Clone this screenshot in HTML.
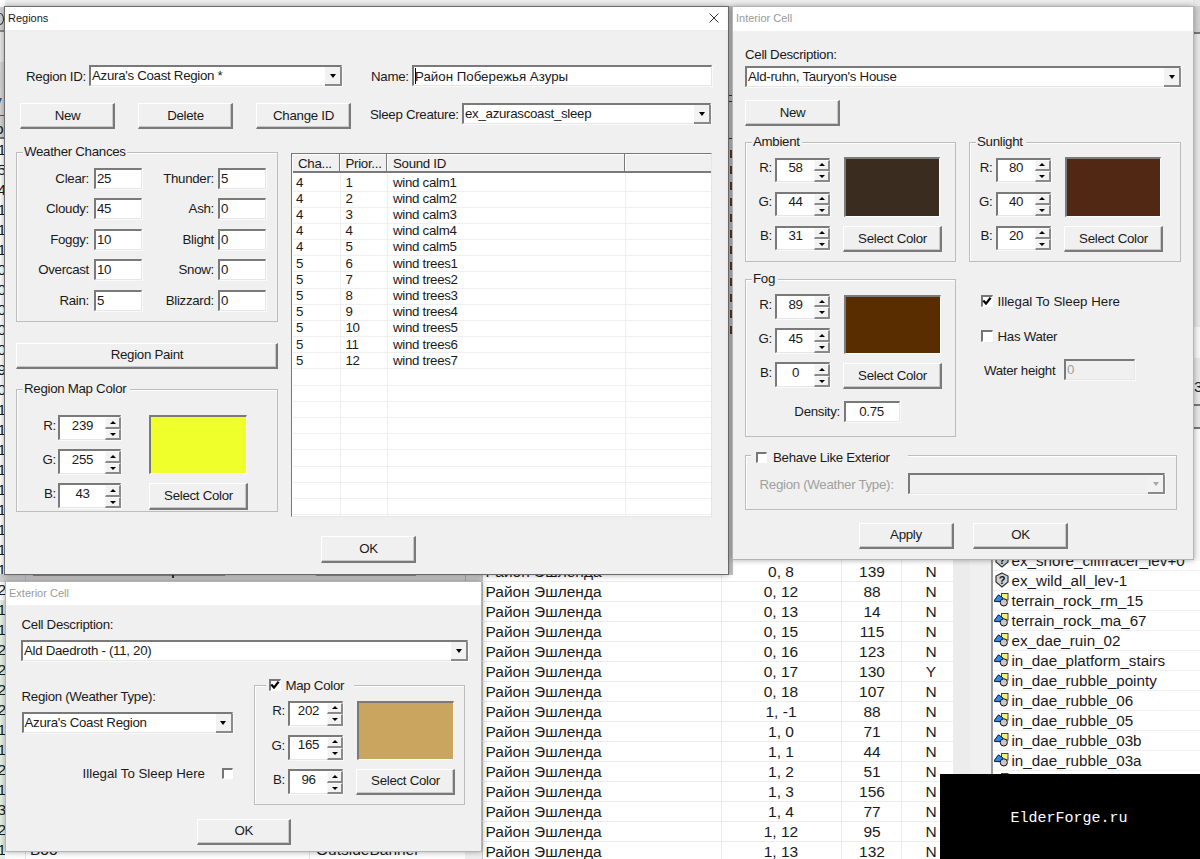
<!DOCTYPE html><html><head><meta charset="utf-8"><style>
html,body{margin:0;padding:0}
body{width:1200px;height:859px;overflow:hidden;position:relative;background:#f0f0f0;font-family:"Liberation Sans", sans-serif}
div{box-sizing:border-box}
.t{position:absolute;white-space:pre;letter-spacing:-0.3px}
.ed{position:absolute;border-style:solid;border-width:2px 1px 1px 2px;border-color:#7a7a7a #e6e6e6 #e6e6e6 #7a7a7a;box-shadow:1px 1px 0 #fafafa}
.cb{position:absolute;background:#f2f2f2;border-style:solid;border-width:0 2px 2px 0;border-color:#8a8a8a}
.arr{position:absolute;left:4.5px;top:7px;width:0;height:0;border-left:3.5px solid transparent;border-right:3.5px solid transparent;border-top:4px solid #000}
.sp{position:absolute;background:#f2f2f2;border-style:solid;border-width:1px 2px 2px 1px;border-color:#fafafa #8a8a8a #8a8a8a #fafafa}
.up{position:absolute;left:3.5px;top:2.5px;width:0;height:0;border-left:3px solid transparent;border-right:3px solid transparent;border-bottom:3px solid #000}
.dn{position:absolute;left:3.5px;top:3px;width:0;height:0;border-left:3px solid transparent;border-right:3px solid transparent;border-top:3px solid #000}
.bt{position:absolute;background:#f0f0f0;border-style:solid;border-width:1px 2px 2px 1px;border-color:#fff #7a7a7a #7a7a7a #fff;box-shadow:inset -1px -1px 0 #c8c8c8}
.gb{position:absolute;border:1px solid #bdbdbd;box-shadow:inset 1px 1px 0 #fff}
.gt{position:absolute;background:#f0f0f0}
.sw{position:absolute;border-style:solid;border-width:2px 1px 1px 2px;border-color:#7a7a7a #fff #fff #7a7a7a}
.ck{position:absolute;background:#fff;border-style:solid;border-width:2px 1px 1px 2px;border-color:#777 #fff #fff #777}
.dl{position:absolute;background:#f0f0f0;border:1px solid #6b6b6b;box-shadow:0 0 6px rgba(0,0,0,0.35)}
.tb{position:absolute;background:#fff}
.abs{position:absolute}
</style></head><body>
<div class="abs" style="left:0;top:0;width:1200px;height:7px;background:#efefef"></div>
<div class="abs" style="left:0;top:0;width:5px;height:859px;background:#fff"></div>
<div class="abs" style="left:0;top:7px;width:5px;height:131px;background:#d4d4d4"></div>
<div class="abs" style="left:0;top:30px;width:5px;height:2px;background:#888"></div>
<div class="abs" style="left:0;top:32px;width:5px;height:30px;background:#e6e6e6"></div>
<div class="abs" style="left:-4px;top:13px;width:8px;height:12px;border:1.5px solid #333;border-radius:50%"></div>
<div class="t" style="left:-5px;top:69.88px;font-size:15.5px;line-height:15.5px;color:#2a3a6a;letter-spacing:0">(</div>
<div class="abs" style="left:0;top:115px;width:5px;height:1px;background:#555"></div>
<div class="abs" style="left:0;top:137px;width:5px;height:2px;background:#777"></div>
<div class="abs" style="left:0;top:600px;width:5px;height:259px;background:#e4f0e4"></div>
<div class="t" style="left:-2.5px;top:141.88px;font-size:15.5px;line-height:15.5px;color:#1a1a1a;letter-spacing:0">1</div>
<div class="t" style="left:-2.5px;top:161.88px;font-size:15.5px;line-height:15.5px;color:#1a1a1a;letter-spacing:0">5</div>
<div class="t" style="left:-2.5px;top:181.88px;font-size:15.5px;line-height:15.5px;color:#1a1a1a;letter-spacing:0">4</div>
<div class="t" style="left:-2.5px;top:201.88px;font-size:15.5px;line-height:15.5px;color:#1a1a1a;letter-spacing:0">1</div>
<div class="t" style="left:-2.5px;top:221.88px;font-size:15.5px;line-height:15.5px;color:#1a1a1a;letter-spacing:0">1</div>
<div class="t" style="left:-2.5px;top:241.88px;font-size:15.5px;line-height:15.5px;color:#1a1a1a;letter-spacing:0">1</div>
<div class="t" style="left:-2.5px;top:261.88px;font-size:15.5px;line-height:15.5px;color:#1a1a1a;letter-spacing:0">0</div>
<div class="t" style="left:-2.5px;top:281.88px;font-size:15.5px;line-height:15.5px;color:#1a1a1a;letter-spacing:0">0</div>
<div class="t" style="left:-2.5px;top:301.88px;font-size:15.5px;line-height:15.5px;color:#1a1a1a;letter-spacing:0">0</div>
<div class="t" style="left:-2.5px;top:321.88px;font-size:15.5px;line-height:15.5px;color:#1a1a1a;letter-spacing:0">0</div>
<div class="t" style="left:-2.5px;top:341.88px;font-size:15.5px;line-height:15.5px;color:#1a1a1a;letter-spacing:0">0</div>
<div class="t" style="left:-2.5px;top:361.88px;font-size:15.5px;line-height:15.5px;color:#1a1a1a;letter-spacing:0">9</div>
<div class="t" style="left:-2.5px;top:381.88px;font-size:15.5px;line-height:15.5px;color:#1a1a1a;letter-spacing:0">0</div>
<div class="t" style="left:-2.5px;top:401.88px;font-size:15.5px;line-height:15.5px;color:#1a1a1a;letter-spacing:0">1</div>
<div class="t" style="left:-2.5px;top:421.88px;font-size:15.5px;line-height:15.5px;color:#1a1a1a;letter-spacing:0">1</div>
<div class="t" style="left:-2.5px;top:441.88px;font-size:15.5px;line-height:15.5px;color:#1a1a1a;letter-spacing:0">1</div>
<div class="t" style="left:-2.5px;top:461.88px;font-size:15.5px;line-height:15.5px;color:#1a1a1a;letter-spacing:0">1</div>
<div class="t" style="left:-2.5px;top:481.88px;font-size:15.5px;line-height:15.5px;color:#1a1a1a;letter-spacing:0">1</div>
<div class="t" style="left:-2.5px;top:501.88px;font-size:15.5px;line-height:15.5px;color:#1a1a1a;letter-spacing:0">1</div>
<div class="t" style="left:-2.5px;top:521.88px;font-size:15.5px;line-height:15.5px;color:#1a1a1a;letter-spacing:0">1</div>
<div class="t" style="left:-2.5px;top:541.88px;font-size:15.5px;line-height:15.5px;color:#1a1a1a;letter-spacing:0">1</div>
<div class="t" style="left:-2.5px;top:561.88px;font-size:15.5px;line-height:15.5px;color:#1a1a1a;letter-spacing:0">1</div>
<div class="t" style="left:-2.5px;top:581.88px;font-size:15.5px;line-height:15.5px;color:#1a1a1a;letter-spacing:0">2</div>
<div class="t" style="left:-2.5px;top:601.88px;font-size:15.5px;line-height:15.5px;color:#1a1a1a;letter-spacing:0">1</div>
<div class="t" style="left:-2.5px;top:621.88px;font-size:15.5px;line-height:15.5px;color:#1a1a1a;letter-spacing:0">1</div>
<div class="t" style="left:-2.5px;top:641.88px;font-size:15.5px;line-height:15.5px;color:#1a1a1a;letter-spacing:0">2</div>
<div class="t" style="left:-2.5px;top:661.88px;font-size:15.5px;line-height:15.5px;color:#1a1a1a;letter-spacing:0">2</div>
<div class="t" style="left:-2.5px;top:681.88px;font-size:15.5px;line-height:15.5px;color:#1a1a1a;letter-spacing:0">2</div>
<div class="t" style="left:-2.5px;top:701.88px;font-size:15.5px;line-height:15.5px;color:#1a1a1a;letter-spacing:0">2</div>
<div class="t" style="left:-2.5px;top:721.88px;font-size:15.5px;line-height:15.5px;color:#1a1a1a;letter-spacing:0">1</div>
<div class="t" style="left:-2.5px;top:741.88px;font-size:15.5px;line-height:15.5px;color:#1a1a1a;letter-spacing:0">1</div>
<div class="t" style="left:-2.5px;top:761.88px;font-size:15.5px;line-height:15.5px;color:#1a1a1a;letter-spacing:0">2</div>
<div class="t" style="left:-2.5px;top:781.88px;font-size:15.5px;line-height:15.5px;color:#1a1a1a;letter-spacing:0">1</div>
<div class="t" style="left:-2.5px;top:801.88px;font-size:15.5px;line-height:15.5px;color:#1a1a1a;letter-spacing:0">3</div>
<div class="t" style="left:-2.5px;top:821.88px;font-size:15.5px;line-height:15.5px;color:#1a1a1a;letter-spacing:0">2</div>
<div class="t" style="left:-2.5px;top:841.88px;font-size:15.5px;line-height:15.5px;color:#1a1a1a;letter-spacing:0">1</div>
<div class="t" style="left:-6px;top:92.88px;font-size:15.5px;line-height:15.5px;color:#2a3a6a;letter-spacing:0">v</div>
<div class="t" style="left:-5px;top:120.88px;font-size:15.5px;line-height:15.5px;color:#1a1a1a;letter-spacing:0">o</div>
<div class="abs" style="left:0;top:574px;width:482px;height:8px;background:#cdcdcd"></div>
<div class="abs" style="left:465px;top:574px;width:1px;height:8px;background:#aaa"></div>
<div class="abs" style="left:25px;top:574px;width:1px;height:8px;background:#bbb"></div>
<div class="abs" style="left:33px;top:575px;width:192px;height:1px;background:#8a8a8a"></div>
<div class="abs" style="left:316px;top:575px;width:100px;height:1px;background:#8a8a8a"></div>
<div class="abs" style="left:172px;top:575px;width:1.5px;height:3px;background:#333"></div>
<div class="abs" style="left:5px;top:845px;width:477px;height:14px;background:#fff"></div>
<div class="abs" style="left:25px;top:845px;width:1px;height:14px;background:#e4e4e4"></div>
<div class="abs" style="left:309px;top:845px;width:1px;height:14px;background:#e4e4e4"></div>
<div class="abs" style="left:465px;top:845px;width:17px;height:14px;background:#f0f0f0"></div>
<div class="t" style="left:30px;top:841.88px;font-size:15.5px;line-height:15.5px;color:#1a1a1a;letter-spacing:0">Boo</div>
<div class="t" style="left:316px;top:841.88px;font-size:15.5px;line-height:15.5px;color:#1a1a1a;letter-spacing:0">OutsideBanner</div>
<div class="abs" style="left:482px;top:540px;width:471px;height:319px;background:#fff"></div>
<div class="abs" style="left:481.5px;top:540px;width:1.5px;height:319px;background:#c4c4c4"></div>
<div class="abs" style="left:721px;top:540px;width:1px;height:319px;background:#ececec"></div>
<div class="abs" style="left:841px;top:540px;width:1px;height:319px;background:#ececec"></div>
<div class="abs" style="left:901px;top:540px;width:1px;height:319px;background:#ececec"></div>
<div class="abs" style="left:482px;top:581px;width:471px;height:1px;background:#ececec"></div>
<div class="t" style="left:485.5px;top:564.38px;font-size:15.5px;line-height:15.5px;color:#1a1a1a;letter-spacing:0">Район Эшленда</div>
<div class="t" style="left:581px;width:400px;text-align:center;top:564.38px;font-size:15.5px;line-height:15.5px;color:#1a1a1a;letter-spacing:0">0, 8</div>
<div class="t" style="left:672px;width:400px;text-align:center;top:564.38px;font-size:15.5px;line-height:15.5px;color:#1a1a1a;letter-spacing:0">139</div>
<div class="t" style="left:731px;width:400px;text-align:center;top:564.38px;font-size:15.5px;line-height:15.5px;color:#1a1a1a;letter-spacing:0">N</div>
<div class="abs" style="left:482px;top:601px;width:471px;height:1px;background:#ececec"></div>
<div class="t" style="left:485.5px;top:584.38px;font-size:15.5px;line-height:15.5px;color:#1a1a1a;letter-spacing:0">Район Эшленда</div>
<div class="t" style="left:581px;width:400px;text-align:center;top:584.38px;font-size:15.5px;line-height:15.5px;color:#1a1a1a;letter-spacing:0">0, 12</div>
<div class="t" style="left:672px;width:400px;text-align:center;top:584.38px;font-size:15.5px;line-height:15.5px;color:#1a1a1a;letter-spacing:0">88</div>
<div class="t" style="left:731px;width:400px;text-align:center;top:584.38px;font-size:15.5px;line-height:15.5px;color:#1a1a1a;letter-spacing:0">N</div>
<div class="abs" style="left:482px;top:621px;width:471px;height:1px;background:#ececec"></div>
<div class="t" style="left:485.5px;top:604.38px;font-size:15.5px;line-height:15.5px;color:#1a1a1a;letter-spacing:0">Район Эшленда</div>
<div class="t" style="left:581px;width:400px;text-align:center;top:604.38px;font-size:15.5px;line-height:15.5px;color:#1a1a1a;letter-spacing:0">0, 13</div>
<div class="t" style="left:672px;width:400px;text-align:center;top:604.38px;font-size:15.5px;line-height:15.5px;color:#1a1a1a;letter-spacing:0">14</div>
<div class="t" style="left:731px;width:400px;text-align:center;top:604.38px;font-size:15.5px;line-height:15.5px;color:#1a1a1a;letter-spacing:0">N</div>
<div class="abs" style="left:482px;top:641px;width:471px;height:1px;background:#ececec"></div>
<div class="t" style="left:485.5px;top:624.38px;font-size:15.5px;line-height:15.5px;color:#1a1a1a;letter-spacing:0">Район Эшленда</div>
<div class="t" style="left:581px;width:400px;text-align:center;top:624.38px;font-size:15.5px;line-height:15.5px;color:#1a1a1a;letter-spacing:0">0, 15</div>
<div class="t" style="left:672px;width:400px;text-align:center;top:624.38px;font-size:15.5px;line-height:15.5px;color:#1a1a1a;letter-spacing:0">115</div>
<div class="t" style="left:731px;width:400px;text-align:center;top:624.38px;font-size:15.5px;line-height:15.5px;color:#1a1a1a;letter-spacing:0">N</div>
<div class="abs" style="left:482px;top:661px;width:471px;height:1px;background:#ececec"></div>
<div class="t" style="left:485.5px;top:644.38px;font-size:15.5px;line-height:15.5px;color:#1a1a1a;letter-spacing:0">Район Эшленда</div>
<div class="t" style="left:581px;width:400px;text-align:center;top:644.38px;font-size:15.5px;line-height:15.5px;color:#1a1a1a;letter-spacing:0">0, 16</div>
<div class="t" style="left:672px;width:400px;text-align:center;top:644.38px;font-size:15.5px;line-height:15.5px;color:#1a1a1a;letter-spacing:0">123</div>
<div class="t" style="left:731px;width:400px;text-align:center;top:644.38px;font-size:15.5px;line-height:15.5px;color:#1a1a1a;letter-spacing:0">N</div>
<div class="abs" style="left:482px;top:681px;width:471px;height:1px;background:#ececec"></div>
<div class="t" style="left:485.5px;top:664.38px;font-size:15.5px;line-height:15.5px;color:#1a1a1a;letter-spacing:0">Район Эшленда</div>
<div class="t" style="left:581px;width:400px;text-align:center;top:664.38px;font-size:15.5px;line-height:15.5px;color:#1a1a1a;letter-spacing:0">0, 17</div>
<div class="t" style="left:672px;width:400px;text-align:center;top:664.38px;font-size:15.5px;line-height:15.5px;color:#1a1a1a;letter-spacing:0">130</div>
<div class="t" style="left:731px;width:400px;text-align:center;top:664.38px;font-size:15.5px;line-height:15.5px;color:#1a1a1a;letter-spacing:0">Y</div>
<div class="abs" style="left:482px;top:701px;width:471px;height:1px;background:#ececec"></div>
<div class="t" style="left:485.5px;top:684.38px;font-size:15.5px;line-height:15.5px;color:#1a1a1a;letter-spacing:0">Район Эшленда</div>
<div class="t" style="left:581px;width:400px;text-align:center;top:684.38px;font-size:15.5px;line-height:15.5px;color:#1a1a1a;letter-spacing:0">0, 18</div>
<div class="t" style="left:672px;width:400px;text-align:center;top:684.38px;font-size:15.5px;line-height:15.5px;color:#1a1a1a;letter-spacing:0">107</div>
<div class="t" style="left:731px;width:400px;text-align:center;top:684.38px;font-size:15.5px;line-height:15.5px;color:#1a1a1a;letter-spacing:0">N</div>
<div class="abs" style="left:482px;top:721px;width:471px;height:1px;background:#ececec"></div>
<div class="t" style="left:485.5px;top:704.38px;font-size:15.5px;line-height:15.5px;color:#1a1a1a;letter-spacing:0">Район Эшленда</div>
<div class="t" style="left:581px;width:400px;text-align:center;top:704.38px;font-size:15.5px;line-height:15.5px;color:#1a1a1a;letter-spacing:0">1, -1</div>
<div class="t" style="left:672px;width:400px;text-align:center;top:704.38px;font-size:15.5px;line-height:15.5px;color:#1a1a1a;letter-spacing:0">88</div>
<div class="t" style="left:731px;width:400px;text-align:center;top:704.38px;font-size:15.5px;line-height:15.5px;color:#1a1a1a;letter-spacing:0">N</div>
<div class="abs" style="left:482px;top:741px;width:471px;height:1px;background:#ececec"></div>
<div class="t" style="left:485.5px;top:724.38px;font-size:15.5px;line-height:15.5px;color:#1a1a1a;letter-spacing:0">Район Эшленда</div>
<div class="t" style="left:581px;width:400px;text-align:center;top:724.38px;font-size:15.5px;line-height:15.5px;color:#1a1a1a;letter-spacing:0">1, 0</div>
<div class="t" style="left:672px;width:400px;text-align:center;top:724.38px;font-size:15.5px;line-height:15.5px;color:#1a1a1a;letter-spacing:0">71</div>
<div class="t" style="left:731px;width:400px;text-align:center;top:724.38px;font-size:15.5px;line-height:15.5px;color:#1a1a1a;letter-spacing:0">N</div>
<div class="abs" style="left:482px;top:761px;width:471px;height:1px;background:#ececec"></div>
<div class="t" style="left:485.5px;top:744.38px;font-size:15.5px;line-height:15.5px;color:#1a1a1a;letter-spacing:0">Район Эшленда</div>
<div class="t" style="left:581px;width:400px;text-align:center;top:744.38px;font-size:15.5px;line-height:15.5px;color:#1a1a1a;letter-spacing:0">1, 1</div>
<div class="t" style="left:672px;width:400px;text-align:center;top:744.38px;font-size:15.5px;line-height:15.5px;color:#1a1a1a;letter-spacing:0">44</div>
<div class="t" style="left:731px;width:400px;text-align:center;top:744.38px;font-size:15.5px;line-height:15.5px;color:#1a1a1a;letter-spacing:0">N</div>
<div class="abs" style="left:482px;top:781px;width:471px;height:1px;background:#ececec"></div>
<div class="t" style="left:485.5px;top:764.38px;font-size:15.5px;line-height:15.5px;color:#1a1a1a;letter-spacing:0">Район Эшленда</div>
<div class="t" style="left:581px;width:400px;text-align:center;top:764.38px;font-size:15.5px;line-height:15.5px;color:#1a1a1a;letter-spacing:0">1, 2</div>
<div class="t" style="left:672px;width:400px;text-align:center;top:764.38px;font-size:15.5px;line-height:15.5px;color:#1a1a1a;letter-spacing:0">51</div>
<div class="t" style="left:731px;width:400px;text-align:center;top:764.38px;font-size:15.5px;line-height:15.5px;color:#1a1a1a;letter-spacing:0">N</div>
<div class="abs" style="left:482px;top:801px;width:471px;height:1px;background:#ececec"></div>
<div class="t" style="left:485.5px;top:784.38px;font-size:15.5px;line-height:15.5px;color:#1a1a1a;letter-spacing:0">Район Эшленда</div>
<div class="t" style="left:581px;width:400px;text-align:center;top:784.38px;font-size:15.5px;line-height:15.5px;color:#1a1a1a;letter-spacing:0">1, 3</div>
<div class="t" style="left:672px;width:400px;text-align:center;top:784.38px;font-size:15.5px;line-height:15.5px;color:#1a1a1a;letter-spacing:0">156</div>
<div class="t" style="left:731px;width:400px;text-align:center;top:784.38px;font-size:15.5px;line-height:15.5px;color:#1a1a1a;letter-spacing:0">N</div>
<div class="abs" style="left:482px;top:821px;width:471px;height:1px;background:#ececec"></div>
<div class="t" style="left:485.5px;top:804.38px;font-size:15.5px;line-height:15.5px;color:#1a1a1a;letter-spacing:0">Район Эшленда</div>
<div class="t" style="left:581px;width:400px;text-align:center;top:804.38px;font-size:15.5px;line-height:15.5px;color:#1a1a1a;letter-spacing:0">1, 4</div>
<div class="t" style="left:672px;width:400px;text-align:center;top:804.38px;font-size:15.5px;line-height:15.5px;color:#1a1a1a;letter-spacing:0">77</div>
<div class="t" style="left:731px;width:400px;text-align:center;top:804.38px;font-size:15.5px;line-height:15.5px;color:#1a1a1a;letter-spacing:0">N</div>
<div class="abs" style="left:482px;top:841px;width:471px;height:1px;background:#ececec"></div>
<div class="t" style="left:485.5px;top:824.38px;font-size:15.5px;line-height:15.5px;color:#1a1a1a;letter-spacing:0">Район Эшленда</div>
<div class="t" style="left:581px;width:400px;text-align:center;top:824.38px;font-size:15.5px;line-height:15.5px;color:#1a1a1a;letter-spacing:0">1, 12</div>
<div class="t" style="left:672px;width:400px;text-align:center;top:824.38px;font-size:15.5px;line-height:15.5px;color:#1a1a1a;letter-spacing:0">95</div>
<div class="t" style="left:731px;width:400px;text-align:center;top:824.38px;font-size:15.5px;line-height:15.5px;color:#1a1a1a;letter-spacing:0">N</div>
<div class="abs" style="left:482px;top:861px;width:471px;height:1px;background:#ececec"></div>
<div class="t" style="left:485.5px;top:844.38px;font-size:15.5px;line-height:15.5px;color:#1a1a1a;letter-spacing:0">Район Эшленда</div>
<div class="t" style="left:581px;width:400px;text-align:center;top:844.38px;font-size:15.5px;line-height:15.5px;color:#1a1a1a;letter-spacing:0">1, 13</div>
<div class="t" style="left:672px;width:400px;text-align:center;top:844.38px;font-size:15.5px;line-height:15.5px;color:#1a1a1a;letter-spacing:0">132</div>
<div class="t" style="left:731px;width:400px;text-align:center;top:844.38px;font-size:15.5px;line-height:15.5px;color:#1a1a1a;letter-spacing:0">N</div>
<div class="abs" style="left:953px;top:540px;width:17px;height:319px;background:#ececec"></div>
<div class="abs" style="left:970px;top:540px;width:22px;height:319px;background:#f0f0f0"></div>
<div class="abs" style="left:991px;top:540px;width:209px;height:319px;background:#fff"></div>
<div class="abs" style="left:991px;top:540px;width:2px;height:319px;background:#9a9a9a"></div>
<div class="abs" style="left:993px;top:570px;width:207px;height:1px;background:#f0f0f0"></div>
<div class="t" style="left:1011.5px;top:552.63px;font-size:15.2px;line-height:15.2px;color:#1a1a1a;letter-spacing:0">ex_shore_cliffracer_lev+0</div>
<svg class="abs" style="left:994px;top:552px" width="16" height="16" viewBox="0 0 16 16"><path d="M8 1 L14 4 L14 10 L8 15 L2 10 L2 4 Z" fill="#d0d0d0" stroke="#333" stroke-width="1.2"/><text x="8" y="12" font-size="11" font-family="Liberation Sans" font-weight="bold" text-anchor="middle" fill="#111">?</text></svg>
<div class="abs" style="left:993px;top:590px;width:207px;height:1px;background:#f0f0f0"></div>
<div class="t" style="left:1011.5px;top:572.63px;font-size:15.2px;line-height:15.2px;color:#1a1a1a;letter-spacing:0">ex_wild_all_lev-1</div>
<svg class="abs" style="left:994px;top:572px" width="16" height="16" viewBox="0 0 16 16"><path d="M8 1 L14 4 L14 10 L8 15 L2 10 L2 4 Z" fill="#d0d0d0" stroke="#333" stroke-width="1.2"/><text x="8" y="12" font-size="11" font-family="Liberation Sans" font-weight="bold" text-anchor="middle" fill="#111">?</text></svg>
<div class="abs" style="left:993px;top:610px;width:207px;height:1px;background:#f0f0f0"></div>
<div class="t" style="left:1011.5px;top:592.63px;font-size:15.2px;line-height:15.2px;color:#1a1a1a;letter-spacing:0">terrain_rock_rm_15</div>
<svg class="abs" style="left:994px;top:592px" width="16" height="16" viewBox="0 0 16 16"><rect x="7.5" y="1.5" width="6.5" height="6.5" fill="#f2f27a" stroke="#443" stroke-width="1"/><path d="M0.6 9.6 L0.6 8 L4.5 2.8 L9 6 L9 9.6 Z" fill="#2a8ae8" stroke="#0a1a3a" stroke-width="1"/><circle cx="9.8" cy="10.4" r="3.6" fill="#c8c8cc" stroke="#111" stroke-width="1"/></svg>
<div class="abs" style="left:993px;top:630px;width:207px;height:1px;background:#f0f0f0"></div>
<div class="t" style="left:1011.5px;top:612.63px;font-size:15.2px;line-height:15.2px;color:#1a1a1a;letter-spacing:0">terrain_rock_ma_67</div>
<svg class="abs" style="left:994px;top:612px" width="16" height="16" viewBox="0 0 16 16"><rect x="7.5" y="1.5" width="6.5" height="6.5" fill="#f2f27a" stroke="#443" stroke-width="1"/><path d="M0.6 9.6 L0.6 8 L4.5 2.8 L9 6 L9 9.6 Z" fill="#2a8ae8" stroke="#0a1a3a" stroke-width="1"/><circle cx="9.8" cy="10.4" r="3.6" fill="#c8c8cc" stroke="#111" stroke-width="1"/></svg>
<div class="abs" style="left:993px;top:650px;width:207px;height:1px;background:#f0f0f0"></div>
<div class="t" style="left:1011.5px;top:632.63px;font-size:15.2px;line-height:15.2px;color:#1a1a1a;letter-spacing:0">ex_dae_ruin_02</div>
<svg class="abs" style="left:994px;top:632px" width="16" height="16" viewBox="0 0 16 16"><rect x="7.5" y="1.5" width="6.5" height="6.5" fill="#f2f27a" stroke="#443" stroke-width="1"/><path d="M0.6 9.6 L0.6 8 L4.5 2.8 L9 6 L9 9.6 Z" fill="#2a8ae8" stroke="#0a1a3a" stroke-width="1"/><circle cx="9.8" cy="10.4" r="3.6" fill="#c8c8cc" stroke="#111" stroke-width="1"/></svg>
<div class="abs" style="left:993px;top:670px;width:207px;height:1px;background:#f0f0f0"></div>
<div class="t" style="left:1011.5px;top:652.63px;font-size:15.2px;line-height:15.2px;color:#1a1a1a;letter-spacing:0">in_dae_platform_stairs</div>
<svg class="abs" style="left:994px;top:652px" width="16" height="16" viewBox="0 0 16 16"><rect x="7.5" y="1.5" width="6.5" height="6.5" fill="#f2f27a" stroke="#443" stroke-width="1"/><path d="M0.6 9.6 L0.6 8 L4.5 2.8 L9 6 L9 9.6 Z" fill="#2a8ae8" stroke="#0a1a3a" stroke-width="1"/><circle cx="9.8" cy="10.4" r="3.6" fill="#c8c8cc" stroke="#111" stroke-width="1"/></svg>
<div class="abs" style="left:993px;top:690px;width:207px;height:1px;background:#f0f0f0"></div>
<div class="t" style="left:1011.5px;top:672.63px;font-size:15.2px;line-height:15.2px;color:#1a1a1a;letter-spacing:0">in_dae_rubble_pointy</div>
<svg class="abs" style="left:994px;top:672px" width="16" height="16" viewBox="0 0 16 16"><rect x="7.5" y="1.5" width="6.5" height="6.5" fill="#f2f27a" stroke="#443" stroke-width="1"/><path d="M0.6 9.6 L0.6 8 L4.5 2.8 L9 6 L9 9.6 Z" fill="#2a8ae8" stroke="#0a1a3a" stroke-width="1"/><circle cx="9.8" cy="10.4" r="3.6" fill="#c8c8cc" stroke="#111" stroke-width="1"/></svg>
<div class="abs" style="left:993px;top:710px;width:207px;height:1px;background:#f0f0f0"></div>
<div class="t" style="left:1011.5px;top:692.63px;font-size:15.2px;line-height:15.2px;color:#1a1a1a;letter-spacing:0">in_dae_rubble_06</div>
<svg class="abs" style="left:994px;top:692px" width="16" height="16" viewBox="0 0 16 16"><rect x="7.5" y="1.5" width="6.5" height="6.5" fill="#f2f27a" stroke="#443" stroke-width="1"/><path d="M0.6 9.6 L0.6 8 L4.5 2.8 L9 6 L9 9.6 Z" fill="#2a8ae8" stroke="#0a1a3a" stroke-width="1"/><circle cx="9.8" cy="10.4" r="3.6" fill="#c8c8cc" stroke="#111" stroke-width="1"/></svg>
<div class="abs" style="left:993px;top:730px;width:207px;height:1px;background:#f0f0f0"></div>
<div class="t" style="left:1011.5px;top:712.63px;font-size:15.2px;line-height:15.2px;color:#1a1a1a;letter-spacing:0">in_dae_rubble_05</div>
<svg class="abs" style="left:994px;top:712px" width="16" height="16" viewBox="0 0 16 16"><rect x="7.5" y="1.5" width="6.5" height="6.5" fill="#f2f27a" stroke="#443" stroke-width="1"/><path d="M0.6 9.6 L0.6 8 L4.5 2.8 L9 6 L9 9.6 Z" fill="#2a8ae8" stroke="#0a1a3a" stroke-width="1"/><circle cx="9.8" cy="10.4" r="3.6" fill="#c8c8cc" stroke="#111" stroke-width="1"/></svg>
<div class="abs" style="left:993px;top:750px;width:207px;height:1px;background:#f0f0f0"></div>
<div class="t" style="left:1011.5px;top:732.63px;font-size:15.2px;line-height:15.2px;color:#1a1a1a;letter-spacing:0">in_dae_rubble_03b</div>
<svg class="abs" style="left:994px;top:732px" width="16" height="16" viewBox="0 0 16 16"><rect x="7.5" y="1.5" width="6.5" height="6.5" fill="#f2f27a" stroke="#443" stroke-width="1"/><path d="M0.6 9.6 L0.6 8 L4.5 2.8 L9 6 L9 9.6 Z" fill="#2a8ae8" stroke="#0a1a3a" stroke-width="1"/><circle cx="9.8" cy="10.4" r="3.6" fill="#c8c8cc" stroke="#111" stroke-width="1"/></svg>
<div class="abs" style="left:993px;top:770px;width:207px;height:1px;background:#f0f0f0"></div>
<div class="t" style="left:1011.5px;top:752.63px;font-size:15.2px;line-height:15.2px;color:#1a1a1a;letter-spacing:0">in_dae_rubble_03a</div>
<svg class="abs" style="left:994px;top:752px" width="16" height="16" viewBox="0 0 16 16"><rect x="7.5" y="1.5" width="6.5" height="6.5" fill="#f2f27a" stroke="#443" stroke-width="1"/><path d="M0.6 9.6 L0.6 8 L4.5 2.8 L9 6 L9 9.6 Z" fill="#2a8ae8" stroke="#0a1a3a" stroke-width="1"/><circle cx="9.8" cy="10.4" r="3.6" fill="#c8c8cc" stroke="#111" stroke-width="1"/></svg>
<div class="abs" style="left:993px;top:790px;width:207px;height:1px;background:#f0f0f0"></div>
<div class="t" style="left:1011.5px;top:772.63px;font-size:15.2px;line-height:15.2px;color:#1a1a1a;letter-spacing:0">in_dae_rubble_02</div>
<svg class="abs" style="left:994px;top:772px" width="16" height="16" viewBox="0 0 16 16"><rect x="7.5" y="1.5" width="6.5" height="6.5" fill="#f2f27a" stroke="#443" stroke-width="1"/><path d="M0.6 9.6 L0.6 8 L4.5 2.8 L9 6 L9 9.6 Z" fill="#2a8ae8" stroke="#0a1a3a" stroke-width="1"/><circle cx="9.8" cy="10.4" r="3.6" fill="#c8c8cc" stroke="#111" stroke-width="1"/></svg>
<div class="abs" style="left:728px;top:6px;width:5px;height:569px;background:#c4c4c4"></div>
<div class="abs" style="left:728px;top:95px;width:5px;height:1px;background:#333"></div>
<div class="abs" style="left:728px;top:101px;width:5px;height:1px;background:#333"></div>
<div class="abs" style="left:728px;top:138px;width:5px;height:1px;background:#333"></div>
<div class="abs" style="left:730px;top:150px;width:1.5px;height:8px;background:#5a3a2a"></div>
<div class="abs" style="left:730px;top:166px;width:1.5px;height:8px;background:#5a3a2a"></div>
<div class="abs" style="left:730px;top:182px;width:1.5px;height:8px;background:#5a3a2a"></div>
<div class="abs" style="left:730px;top:198px;width:1.5px;height:8px;background:#5a3a2a"></div>
<div class="abs" style="left:730px;top:214px;width:1.5px;height:8px;background:#5a3a2a"></div>
<div class="abs" style="left:730px;top:230px;width:1.5px;height:8px;background:#5a3a2a"></div>
<div class="abs" style="left:730px;top:246px;width:1.5px;height:8px;background:#5a3a2a"></div>
<div class="abs" style="left:730px;top:262px;width:1.5px;height:8px;background:#5a3a2a"></div>
<div class="abs" style="left:730px;top:278px;width:1.5px;height:8px;background:#5a3a2a"></div>
<div class="abs" style="left:730px;top:294px;width:1.5px;height:8px;background:#5a3a2a"></div>
<div class="abs" style="left:730px;top:310px;width:1.5px;height:8px;background:#5a3a2a"></div>
<div class="abs" style="left:730px;top:326px;width:1.5px;height:8px;background:#5a3a2a"></div>
<div class="abs" style="left:1193px;top:0;width:7px;height:561px;background:#e8e8e8"></div>
<div class="abs" style="left:1193px;top:6px;width:7px;height:27px;background:#d2d2d2"></div>
<div class="abs" style="left:1193px;top:32px;width:7px;height:2px;background:#777"></div>
<div class="abs" style="left:1193px;top:327px;width:7px;height:31px;background:#f8f8f8"></div>
<div class="abs" style="left:1193px;top:404px;width:7px;height:2px;background:#777"></div>
<div class="abs" style="left:1193px;top:427px;width:7px;height:2px;background:#777"></div>
<div class="abs" style="left:1193px;top:429px;width:7px;height:132px;background:#fafafa"></div>
<div class="t" style="left:1194px;top:378.88px;font-size:15.5px;line-height:15.5px;color:#1a1a1a;letter-spacing:0">3</div>
<div class="dl" style="left:4px;top:6px;width:725px;height:569px;border-color:#6b6b6b"></div>
<div class="tb" style="left:5px;top:7px;width:723px;height:23px"></div>
<div class="t" style="left:8px;top:12.69px;font-size:11px;line-height:11px;color:#1a1a1a;letter-spacing:0">Regions</div>
<svg style="position:absolute;left:709px;top:13px" width="10" height="10" viewBox="0 0 10 10"><path d="M0.5 0.5 L9.5 9.5 M9.5 0.5 L0.5 9.5" stroke="#333" stroke-width="1"/></svg>
<div class="t" style="left:26px;top:69.74px;font-size:13.3px;line-height:13.3px;color:#1a1a1a;">Region ID:</div>
<div class="ed" style="left:89px;top:65px;width:253px;height:21px;background:#fff"></div>
<div class="t" style="left:92px;top:69.44px;font-size:13.3px;line-height:13.3px;color:#1a1a1a;">Azura's Coast Region *</div>
<div class="cb" style="left:325px;top:67px;width:17px;height:19px"><div class="arr" style="border-top-color:#000"></div></div>
<div class="t" style="left:371px;top:69.74px;font-size:13.3px;line-height:13.3px;color:#1a1a1a;">Name:</div>
<div class="ed" style="left:412px;top:65px;width:300px;height:21px;background:#fff"></div>
<div class="t" style="left:415px;top:69.74px;font-size:13.3px;line-height:13.3px;color:#1a1a1a;letter-spacing:0">Район Побережья Азуры</div>
<div class="abs" style="left:415px;top:68px;width:1px;height:16px;background:#000"></div>
<div class="bt" style="left:20px;top:103px;width:95px;height:26px"></div>
<div class="t" style="left:-132.5px;width:400px;text-align:center;top:108.54px;font-size:13.3px;line-height:13.3px;color:#1a1a1a;">New</div>
<div class="bt" style="left:138px;top:103px;width:95px;height:26px"></div>
<div class="t" style="left:-14.5px;width:400px;text-align:center;top:108.54px;font-size:13.3px;line-height:13.3px;color:#1a1a1a;">Delete</div>
<div class="bt" style="left:256px;top:103px;width:95px;height:26px"></div>
<div class="t" style="left:103.5px;width:400px;text-align:center;top:108.54px;font-size:13.3px;line-height:13.3px;color:#1a1a1a;">Change ID</div>
<div class="t" style="left:370px;top:107.74px;font-size:13.3px;line-height:13.3px;color:#1a1a1a;">Sleep Creature:</div>
<div class="ed" style="left:462px;top:103px;width:249px;height:21px;background:#fff"></div>
<div class="t" style="left:465px;top:107.44px;font-size:13.3px;line-height:13.3px;color:#1a1a1a;">ex_azurascoast_sleep</div>
<div class="cb" style="left:694px;top:105px;width:17px;height:19px"><div class="arr" style="border-top-color:#000"></div></div>
<div class="gb" style="left:16px;top:152px;width:262px;height:170px"></div>
<div class="gt" style="left:23px;top:144px;height:14px;width:104px"></div>
<div class="t" style="left:24px;top:145.24px;font-size:13.3px;line-height:13.3px;color:#1a1a1a;">Weather Chances</div>
<div class="t" style="left:-211px;width:300px;text-align:right;top:171.74px;font-size:13.3px;line-height:13.3px;color:#1a1a1a;">Clear:</div>
<div class="ed" style="left:94px;top:168px;width:48px;height:21px;background:#fff"></div>
<div class="t" style="left:97px;top:172.44px;font-size:13.3px;line-height:13.3px;color:#1a1a1a;">25</div>
<div class="t" style="left:-86px;width:300px;text-align:right;top:171.74px;font-size:13.3px;line-height:13.3px;color:#1a1a1a;">Thunder:</div>
<div class="ed" style="left:218px;top:168px;width:48px;height:21px;background:#fff"></div>
<div class="t" style="left:221px;top:172.44px;font-size:13.3px;line-height:13.3px;color:#1a1a1a;">5</div>
<div class="t" style="left:-211px;width:300px;text-align:right;top:201.74px;font-size:13.3px;line-height:13.3px;color:#1a1a1a;">Cloudy:</div>
<div class="ed" style="left:94px;top:198px;width:48px;height:21px;background:#fff"></div>
<div class="t" style="left:97px;top:202.44px;font-size:13.3px;line-height:13.3px;color:#1a1a1a;">45</div>
<div class="t" style="left:-86px;width:300px;text-align:right;top:201.74px;font-size:13.3px;line-height:13.3px;color:#1a1a1a;">Ash:</div>
<div class="ed" style="left:218px;top:198px;width:48px;height:21px;background:#fff"></div>
<div class="t" style="left:221px;top:202.44px;font-size:13.3px;line-height:13.3px;color:#1a1a1a;">0</div>
<div class="t" style="left:-211px;width:300px;text-align:right;top:232.74px;font-size:13.3px;line-height:13.3px;color:#1a1a1a;">Foggy:</div>
<div class="ed" style="left:94px;top:229px;width:48px;height:21px;background:#fff"></div>
<div class="t" style="left:97px;top:233.44px;font-size:13.3px;line-height:13.3px;color:#1a1a1a;">10</div>
<div class="t" style="left:-86px;width:300px;text-align:right;top:232.74px;font-size:13.3px;line-height:13.3px;color:#1a1a1a;">Blight</div>
<div class="ed" style="left:218px;top:229px;width:48px;height:21px;background:#fff"></div>
<div class="t" style="left:221px;top:233.44px;font-size:13.3px;line-height:13.3px;color:#1a1a1a;">0</div>
<div class="t" style="left:-211px;width:300px;text-align:right;top:262.74px;font-size:13.3px;line-height:13.3px;color:#1a1a1a;">Overcast</div>
<div class="ed" style="left:94px;top:259px;width:48px;height:21px;background:#fff"></div>
<div class="t" style="left:97px;top:263.44px;font-size:13.3px;line-height:13.3px;color:#1a1a1a;">10</div>
<div class="t" style="left:-86px;width:300px;text-align:right;top:262.74px;font-size:13.3px;line-height:13.3px;color:#1a1a1a;">Snow:</div>
<div class="ed" style="left:218px;top:259px;width:48px;height:21px;background:#fff"></div>
<div class="t" style="left:221px;top:263.44px;font-size:13.3px;line-height:13.3px;color:#1a1a1a;">0</div>
<div class="t" style="left:-211px;width:300px;text-align:right;top:293.74px;font-size:13.3px;line-height:13.3px;color:#1a1a1a;">Rain:</div>
<div class="ed" style="left:94px;top:290px;width:48px;height:21px;background:#fff"></div>
<div class="t" style="left:97px;top:294.44px;font-size:13.3px;line-height:13.3px;color:#1a1a1a;">5</div>
<div class="t" style="left:-86px;width:300px;text-align:right;top:293.74px;font-size:13.3px;line-height:13.3px;color:#1a1a1a;">Blizzard:</div>
<div class="ed" style="left:218px;top:290px;width:48px;height:21px;background:#fff"></div>
<div class="t" style="left:221px;top:294.44px;font-size:13.3px;line-height:13.3px;color:#1a1a1a;">0</div>
<div class="bt" style="left:16px;top:343px;width:262px;height:25.5px"></div>
<div class="t" style="left:-53.0px;width:400px;text-align:center;top:348.29px;font-size:13.3px;line-height:13.3px;color:#1a1a1a;">Region Paint</div>
<div class="gb" style="left:16px;top:388.5px;width:262px;height:123.5px"></div>
<div class="gt" style="left:23px;top:380.5px;height:14px;width:107px"></div>
<div class="t" style="left:24px;top:381.74px;font-size:13.3px;line-height:13.3px;color:#1a1a1a;">Region Map Color</div>
<div class="t" style="left:-244px;width:300px;text-align:right;top:418.74px;font-size:13.3px;line-height:13.3px;color:#1a1a1a;">R:</div>
<div class="ed" style="left:58px;top:415px;width:63px;height:25px;background:#fff"></div>
<div class="t" style="left:-117.5px;width:400px;text-align:center;top:418.54px;font-size:13.3px;line-height:13.3px;color:#1a1a1a;">239</div>
<div class="sp" style="left:105px;top:417px;width:16px;height:11.5px"><div class="up"></div></div>
<div class="sp" style="left:105px;top:428.5px;width:16px;height:11.5px"><div class="dn"></div></div>
<div class="t" style="left:-244px;width:300px;text-align:right;top:452.74px;font-size:13.3px;line-height:13.3px;color:#1a1a1a;">G:</div>
<div class="ed" style="left:58px;top:449px;width:63px;height:25px;background:#fff"></div>
<div class="t" style="left:-117.5px;width:400px;text-align:center;top:452.54px;font-size:13.3px;line-height:13.3px;color:#1a1a1a;">255</div>
<div class="sp" style="left:105px;top:451px;width:16px;height:11.5px"><div class="up"></div></div>
<div class="sp" style="left:105px;top:462.5px;width:16px;height:11.5px"><div class="dn"></div></div>
<div class="t" style="left:-244px;width:300px;text-align:right;top:486.74px;font-size:13.3px;line-height:13.3px;color:#1a1a1a;">B:</div>
<div class="ed" style="left:58px;top:483px;width:63px;height:25px;background:#fff"></div>
<div class="t" style="left:-117.5px;width:400px;text-align:center;top:486.54px;font-size:13.3px;line-height:13.3px;color:#1a1a1a;">43</div>
<div class="sp" style="left:105px;top:485px;width:16px;height:11.5px"><div class="up"></div></div>
<div class="sp" style="left:105px;top:496.5px;width:16px;height:11.5px"><div class="dn"></div></div>
<div class="sw" style="left:149px;top:415px;width:98px;height:59px;background:#efff2b"></div>
<div class="bt" style="left:149px;top:483px;width:99px;height:27px"></div>
<div class="t" style="left:-1.5px;width:400px;text-align:center;top:489.04px;font-size:13.3px;line-height:13.3px;color:#1a1a1a;">Select Color</div>
<div class="abs" style="left:291px;top:152.5px;width:421px;height:364.5px;background:#fff;border-style:solid;border-width:1.5px 1px 1px 1.5px;border-color:#777 #e6e6e6 #e6e6e6 #777"></div>
<div class="abs" style="left:292.5px;top:154.0px;width:418.5px;height:18.5px;background:#f0f0f0;border-top:1px solid #fff"></div>
<div class="abs" style="left:338.5px;top:154.0px;width:1.5px;height:18.5px;background:#7a7a7a"></div>
<div class="abs" style="left:340.0px;top:155.0px;width:1px;height:17px;background:#fff"></div>
<div class="abs" style="left:385.5px;top:154.0px;width:1.5px;height:18.5px;background:#7a7a7a"></div>
<div class="abs" style="left:387.0px;top:155.0px;width:1px;height:17px;background:#fff"></div>
<div class="abs" style="left:623.5px;top:154.0px;width:1.5px;height:18.5px;background:#7a7a7a"></div>
<div class="abs" style="left:625.0px;top:155.0px;width:1px;height:17px;background:#fff"></div>
<div class="abs" style="left:292.5px;top:171.3px;width:418.5px;height:1.5px;background:#7a7a7a"></div>
<div class="t" style="left:298px;top:157.04px;font-size:13.3px;line-height:13.3px;color:#1a1a1a;">Cha...</div>
<div class="t" style="left:345.5px;top:157.04px;font-size:13.3px;line-height:13.3px;color:#1a1a1a;">Prior...</div>
<div class="t" style="left:393px;top:157.04px;font-size:13.3px;line-height:13.3px;color:#1a1a1a;">Sound ID</div>
<div class="abs" style="left:340px;top:173px;width:1px;height:343px;background:#efefef"></div>
<div class="abs" style="left:386.5px;top:173px;width:1px;height:343px;background:#efefef"></div>
<div class="abs" style="left:625px;top:173px;width:1px;height:343px;background:#efefef"></div>
<div class="abs" style="left:292.5px;top:190.50px;width:418.5px;height:1px;background:#efefef"></div>
<div class="abs" style="left:292.5px;top:206.68px;width:418.5px;height:1px;background:#efefef"></div>
<div class="abs" style="left:292.5px;top:222.86px;width:418.5px;height:1px;background:#efefef"></div>
<div class="abs" style="left:292.5px;top:239.04px;width:418.5px;height:1px;background:#efefef"></div>
<div class="abs" style="left:292.5px;top:255.22px;width:418.5px;height:1px;background:#efefef"></div>
<div class="abs" style="left:292.5px;top:271.40px;width:418.5px;height:1px;background:#efefef"></div>
<div class="abs" style="left:292.5px;top:287.58px;width:418.5px;height:1px;background:#efefef"></div>
<div class="abs" style="left:292.5px;top:303.76px;width:418.5px;height:1px;background:#efefef"></div>
<div class="abs" style="left:292.5px;top:319.94px;width:418.5px;height:1px;background:#efefef"></div>
<div class="abs" style="left:292.5px;top:336.12px;width:418.5px;height:1px;background:#efefef"></div>
<div class="abs" style="left:292.5px;top:352.30px;width:418.5px;height:1px;background:#efefef"></div>
<div class="abs" style="left:292.5px;top:368.48px;width:418.5px;height:1px;background:#efefef"></div>
<div class="abs" style="left:292.5px;top:384.66px;width:418.5px;height:1px;background:#efefef"></div>
<div class="abs" style="left:292.5px;top:400.84px;width:418.5px;height:1px;background:#efefef"></div>
<div class="abs" style="left:292.5px;top:417.02px;width:418.5px;height:1px;background:#efefef"></div>
<div class="abs" style="left:292.5px;top:433.20px;width:418.5px;height:1px;background:#efefef"></div>
<div class="abs" style="left:292.5px;top:449.38px;width:418.5px;height:1px;background:#efefef"></div>
<div class="abs" style="left:292.5px;top:465.56px;width:418.5px;height:1px;background:#efefef"></div>
<div class="abs" style="left:292.5px;top:481.74px;width:418.5px;height:1px;background:#efefef"></div>
<div class="abs" style="left:292.5px;top:497.92px;width:418.5px;height:1px;background:#efefef"></div>
<div class="abs" style="left:292.5px;top:514.10px;width:418.5px;height:1px;background:#efefef"></div>
<div class="t" style="left:296px;top:175.74px;font-size:13.3px;line-height:13.3px;color:#1a1a1a;">4</div>
<div class="t" style="left:345.5px;top:175.74px;font-size:13.3px;line-height:13.3px;color:#1a1a1a;">1</div>
<div class="t" style="left:393px;top:175.74px;font-size:13.3px;line-height:13.3px;color:#1a1a1a;">wind calm1</div>
<div class="t" style="left:296px;top:191.92px;font-size:13.3px;line-height:13.3px;color:#1a1a1a;">4</div>
<div class="t" style="left:345.5px;top:191.92px;font-size:13.3px;line-height:13.3px;color:#1a1a1a;">2</div>
<div class="t" style="left:393px;top:191.92px;font-size:13.3px;line-height:13.3px;color:#1a1a1a;">wind calm2</div>
<div class="t" style="left:296px;top:208.10px;font-size:13.3px;line-height:13.3px;color:#1a1a1a;">4</div>
<div class="t" style="left:345.5px;top:208.10px;font-size:13.3px;line-height:13.3px;color:#1a1a1a;">3</div>
<div class="t" style="left:393px;top:208.10px;font-size:13.3px;line-height:13.3px;color:#1a1a1a;">wind calm3</div>
<div class="t" style="left:296px;top:224.28px;font-size:13.3px;line-height:13.3px;color:#1a1a1a;">4</div>
<div class="t" style="left:345.5px;top:224.28px;font-size:13.3px;line-height:13.3px;color:#1a1a1a;">4</div>
<div class="t" style="left:393px;top:224.28px;font-size:13.3px;line-height:13.3px;color:#1a1a1a;">wind calm4</div>
<div class="t" style="left:296px;top:240.46px;font-size:13.3px;line-height:13.3px;color:#1a1a1a;">4</div>
<div class="t" style="left:345.5px;top:240.46px;font-size:13.3px;line-height:13.3px;color:#1a1a1a;">5</div>
<div class="t" style="left:393px;top:240.46px;font-size:13.3px;line-height:13.3px;color:#1a1a1a;">wind calm5</div>
<div class="t" style="left:296px;top:256.64px;font-size:13.3px;line-height:13.3px;color:#1a1a1a;">5</div>
<div class="t" style="left:345.5px;top:256.64px;font-size:13.3px;line-height:13.3px;color:#1a1a1a;">6</div>
<div class="t" style="left:393px;top:256.64px;font-size:13.3px;line-height:13.3px;color:#1a1a1a;">wind trees1</div>
<div class="t" style="left:296px;top:272.82px;font-size:13.3px;line-height:13.3px;color:#1a1a1a;">5</div>
<div class="t" style="left:345.5px;top:272.82px;font-size:13.3px;line-height:13.3px;color:#1a1a1a;">7</div>
<div class="t" style="left:393px;top:272.82px;font-size:13.3px;line-height:13.3px;color:#1a1a1a;">wind trees2</div>
<div class="t" style="left:296px;top:289.00px;font-size:13.3px;line-height:13.3px;color:#1a1a1a;">5</div>
<div class="t" style="left:345.5px;top:289.00px;font-size:13.3px;line-height:13.3px;color:#1a1a1a;">8</div>
<div class="t" style="left:393px;top:289.00px;font-size:13.3px;line-height:13.3px;color:#1a1a1a;">wind trees3</div>
<div class="t" style="left:296px;top:305.18px;font-size:13.3px;line-height:13.3px;color:#1a1a1a;">5</div>
<div class="t" style="left:345.5px;top:305.18px;font-size:13.3px;line-height:13.3px;color:#1a1a1a;">9</div>
<div class="t" style="left:393px;top:305.18px;font-size:13.3px;line-height:13.3px;color:#1a1a1a;">wind trees4</div>
<div class="t" style="left:296px;top:321.36px;font-size:13.3px;line-height:13.3px;color:#1a1a1a;">5</div>
<div class="t" style="left:345.5px;top:321.36px;font-size:13.3px;line-height:13.3px;color:#1a1a1a;">10</div>
<div class="t" style="left:393px;top:321.36px;font-size:13.3px;line-height:13.3px;color:#1a1a1a;">wind trees5</div>
<div class="t" style="left:296px;top:337.54px;font-size:13.3px;line-height:13.3px;color:#1a1a1a;">5</div>
<div class="t" style="left:345.5px;top:337.54px;font-size:13.3px;line-height:13.3px;color:#1a1a1a;">11</div>
<div class="t" style="left:393px;top:337.54px;font-size:13.3px;line-height:13.3px;color:#1a1a1a;">wind trees6</div>
<div class="t" style="left:296px;top:353.72px;font-size:13.3px;line-height:13.3px;color:#1a1a1a;">5</div>
<div class="t" style="left:345.5px;top:353.72px;font-size:13.3px;line-height:13.3px;color:#1a1a1a;">12</div>
<div class="t" style="left:393px;top:353.72px;font-size:13.3px;line-height:13.3px;color:#1a1a1a;">wind trees7</div>
<div class="bt" style="left:321px;top:536px;width:95px;height:27px"></div>
<div class="t" style="left:168.5px;width:400px;text-align:center;top:542.04px;font-size:13.3px;line-height:13.3px;color:#1a1a1a;">OK</div>
<div class="dl" style="left:732px;top:6px;width:461.5px;height:554px;border-color:#b4b4b4"></div>
<div class="tb" style="left:733px;top:7px;width:459.5px;height:24px"></div>
<div class="t" style="left:736px;top:12.69px;font-size:11px;line-height:11px;color:#9a9a9a;letter-spacing:0">Interior Cell</div>
<div class="t" style="left:745px;top:47.74px;font-size:13.3px;line-height:13.3px;color:#1a1a1a;">Cell Description:</div>
<div class="ed" style="left:745px;top:66px;width:436px;height:21px;background:#fff"></div>
<div class="t" style="left:748px;top:70.44px;font-size:13.3px;line-height:13.3px;color:#1a1a1a;">Ald-ruhn, Tauryon's House</div>
<div class="cb" style="left:1164px;top:68px;width:17px;height:19px"><div class="arr" style="border-top-color:#000"></div></div>
<div class="bt" style="left:745px;top:100px;width:95px;height:26px"></div>
<div class="t" style="left:592.5px;width:400px;text-align:center;top:105.54px;font-size:13.3px;line-height:13.3px;color:#1a1a1a;">New</div>
<div class="gb" style="left:745px;top:142px;width:211px;height:120px"></div>
<div class="gt" style="left:752px;top:134px;height:14px;width:50px"></div>
<div class="t" style="left:753px;top:135.24px;font-size:13.3px;line-height:13.3px;color:#1a1a1a;">Ambient</div>
<div class="t" style="left:472px;width:300px;text-align:right;top:161.24px;font-size:13.3px;line-height:13.3px;color:#1a1a1a;">R:</div>
<div class="ed" style="left:775px;top:157.5px;width:55px;height:24.7px;background:#fff"></div>
<div class="t" style="left:595.5px;width:400px;text-align:center;top:161.04px;font-size:13.3px;line-height:13.3px;color:#1a1a1a;">58</div>
<div class="sp" style="left:814px;top:159.5px;width:16px;height:11.35px"><div class="up"></div></div>
<div class="sp" style="left:814px;top:170.85px;width:16px;height:11.35px"><div class="dn"></div></div>
<div class="t" style="left:472px;width:300px;text-align:right;top:195.24px;font-size:13.3px;line-height:13.3px;color:#1a1a1a;">G:</div>
<div class="ed" style="left:775px;top:191.5px;width:55px;height:24.7px;background:#fff"></div>
<div class="t" style="left:595.5px;width:400px;text-align:center;top:195.04px;font-size:13.3px;line-height:13.3px;color:#1a1a1a;">44</div>
<div class="sp" style="left:814px;top:193.5px;width:16px;height:11.35px"><div class="up"></div></div>
<div class="sp" style="left:814px;top:204.85px;width:16px;height:11.35px"><div class="dn"></div></div>
<div class="t" style="left:472px;width:300px;text-align:right;top:229.24px;font-size:13.3px;line-height:13.3px;color:#1a1a1a;">B:</div>
<div class="ed" style="left:775px;top:225.5px;width:55px;height:24.7px;background:#fff"></div>
<div class="t" style="left:595.5px;width:400px;text-align:center;top:229.04px;font-size:13.3px;line-height:13.3px;color:#1a1a1a;">31</div>
<div class="sp" style="left:814px;top:227.5px;width:16px;height:11.35px"><div class="up"></div></div>
<div class="sp" style="left:814px;top:238.85px;width:16px;height:11.35px"><div class="dn"></div></div>
<div class="sw" style="left:844px;top:157px;width:96px;height:59.5px;background:#3a2c1f"></div>
<div class="bt" style="left:843px;top:226px;width:99px;height:26px"></div>
<div class="t" style="left:692.5px;width:400px;text-align:center;top:231.54px;font-size:13.3px;line-height:13.3px;color:#1a1a1a;">Select Color</div>
<div class="gb" style="left:969px;top:142px;width:212px;height:120px"></div>
<div class="gt" style="left:976px;top:134px;height:14px;width:50px"></div>
<div class="t" style="left:977px;top:135.24px;font-size:13.3px;line-height:13.3px;color:#1a1a1a;">Sunlight</div>
<div class="t" style="left:692.5px;width:300px;text-align:right;top:161.24px;font-size:13.3px;line-height:13.3px;color:#1a1a1a;">R:</div>
<div class="ed" style="left:995.5px;top:157.5px;width:55px;height:24.7px;background:#fff"></div>
<div class="t" style="left:816.0px;width:400px;text-align:center;top:161.04px;font-size:13.3px;line-height:13.3px;color:#1a1a1a;">80</div>
<div class="sp" style="left:1034.5px;top:159.5px;width:16px;height:11.35px"><div class="up"></div></div>
<div class="sp" style="left:1034.5px;top:170.85px;width:16px;height:11.35px"><div class="dn"></div></div>
<div class="t" style="left:692.5px;width:300px;text-align:right;top:195.24px;font-size:13.3px;line-height:13.3px;color:#1a1a1a;">G:</div>
<div class="ed" style="left:995.5px;top:191.5px;width:55px;height:24.7px;background:#fff"></div>
<div class="t" style="left:816.0px;width:400px;text-align:center;top:195.04px;font-size:13.3px;line-height:13.3px;color:#1a1a1a;">40</div>
<div class="sp" style="left:1034.5px;top:193.5px;width:16px;height:11.35px"><div class="up"></div></div>
<div class="sp" style="left:1034.5px;top:204.85px;width:16px;height:11.35px"><div class="dn"></div></div>
<div class="t" style="left:692.5px;width:300px;text-align:right;top:229.24px;font-size:13.3px;line-height:13.3px;color:#1a1a1a;">B:</div>
<div class="ed" style="left:995.5px;top:225.5px;width:55px;height:24.7px;background:#fff"></div>
<div class="t" style="left:816.0px;width:400px;text-align:center;top:229.04px;font-size:13.3px;line-height:13.3px;color:#1a1a1a;">20</div>
<div class="sp" style="left:1034.5px;top:227.5px;width:16px;height:11.35px"><div class="up"></div></div>
<div class="sp" style="left:1034.5px;top:238.85px;width:16px;height:11.35px"><div class="dn"></div></div>
<div class="sw" style="left:1064.5px;top:157px;width:96px;height:59.5px;background:#502814"></div>
<div class="bt" style="left:1064px;top:226px;width:99px;height:26px"></div>
<div class="t" style="left:913.5px;width:400px;text-align:center;top:231.54px;font-size:13.3px;line-height:13.3px;color:#1a1a1a;">Select Color</div>
<div class="gb" style="left:745px;top:279px;width:211px;height:158px"></div>
<div class="gt" style="left:752px;top:271px;height:14px;width:26px"></div>
<div class="t" style="left:753px;top:272.24px;font-size:13.3px;line-height:13.3px;color:#1a1a1a;">Fog</div>
<div class="t" style="left:472px;width:300px;text-align:right;top:297.74px;font-size:13.3px;line-height:13.3px;color:#1a1a1a;">R:</div>
<div class="ed" style="left:775px;top:294.0px;width:55px;height:24.7px;background:#fff"></div>
<div class="t" style="left:595.5px;width:400px;text-align:center;top:297.54px;font-size:13.3px;line-height:13.3px;color:#1a1a1a;">89</div>
<div class="sp" style="left:814px;top:296.0px;width:16px;height:11.35px"><div class="up"></div></div>
<div class="sp" style="left:814px;top:307.35px;width:16px;height:11.35px"><div class="dn"></div></div>
<div class="t" style="left:472px;width:300px;text-align:right;top:331.94px;font-size:13.3px;line-height:13.3px;color:#1a1a1a;">G:</div>
<div class="ed" style="left:775px;top:328.2px;width:55px;height:24.7px;background:#fff"></div>
<div class="t" style="left:595.5px;width:400px;text-align:center;top:331.74px;font-size:13.3px;line-height:13.3px;color:#1a1a1a;">45</div>
<div class="sp" style="left:814px;top:330.2px;width:16px;height:11.35px"><div class="up"></div></div>
<div class="sp" style="left:814px;top:341.55px;width:16px;height:11.35px"><div class="dn"></div></div>
<div class="t" style="left:472px;width:300px;text-align:right;top:366.14px;font-size:13.3px;line-height:13.3px;color:#1a1a1a;">B:</div>
<div class="ed" style="left:775px;top:362.4px;width:55px;height:24.7px;background:#fff"></div>
<div class="t" style="left:595.5px;width:400px;text-align:center;top:365.94px;font-size:13.3px;line-height:13.3px;color:#1a1a1a;">0</div>
<div class="sp" style="left:814px;top:364.4px;width:16px;height:11.35px"><div class="up"></div></div>
<div class="sp" style="left:814px;top:375.75px;width:16px;height:11.35px"><div class="dn"></div></div>
<div class="sw" style="left:843.5px;top:294.5px;width:97px;height:59px;background:#592d00"></div>
<div class="bt" style="left:843px;top:363px;width:99px;height:26px"></div>
<div class="t" style="left:692.5px;width:400px;text-align:center;top:368.54px;font-size:13.3px;line-height:13.3px;color:#1a1a1a;">Select Color</div>
<div class="t" style="left:540px;width:300px;text-align:right;top:404.74px;font-size:13.3px;line-height:13.3px;color:#1a1a1a;">Density:</div>
<div class="ed" style="left:843.5px;top:401px;width:56px;height:21px;background:#fff"></div>
<div class="t" style="left:671.5px;width:400px;text-align:center;top:405.24px;font-size:13.3px;line-height:13.3px;color:#1a1a1a;">0.75</div>
<div class="ck" style="left:980.5px;top:295px;width:12px;height:12px"><svg width="12" height="12" viewBox="0 0 12 12" style="position:absolute;left:-2px;top:-2px"><path d="M2.3 5.6 L5 8.6 L9.6 2.8" stroke="#000" stroke-width="2.2" fill="none"/></svg></div>
<div class="t" style="left:997.5px;top:295.24px;font-size:13.3px;line-height:13.3px;color:#1a1a1a;letter-spacing:0">Illegal To Sleep Here</div>
<div class="ck" style="left:980.5px;top:329.5px;width:12px;height:12px"></div>
<div class="t" style="left:997.5px;top:329.74px;font-size:13.3px;line-height:13.3px;color:#1a1a1a;">Has Water</div>
<div class="t" style="left:984px;top:363.74px;font-size:13.3px;line-height:13.3px;color:#1a1a1a;">Water height</div>
<div class="abs" style="left:1057px;top:362px;width:7px;height:16px;background:#f0f0f0"></div>
<div class="ed" style="left:1064px;top:359px;width:71px;height:21px;background:#f0f0f0"></div>
<div class="t" style="left:1067px;top:363.44px;font-size:13.3px;line-height:13.3px;color:#a0a0a0;">0</div>
<div class="gb" style="left:745px;top:455px;width:432px;height:55px"></div>
<div class="gt" style="left:751px;top:446px;width:157px;height:16px"></div>
<div class="ck" style="left:756px;top:451.5px;width:11px;height:11px"></div>
<div class="t" style="left:773px;top:451.24px;font-size:13.3px;line-height:13.3px;color:#1a1a1a;">Behave Like Exterior</div>
<div class="t" style="left:759.5px;top:478.24px;font-size:13.3px;line-height:13.3px;color:#a0a0a0;">Region (Weather Type):</div>
<div class="ed" style="left:908px;top:473px;width:257px;height:21px;background:#f0f0f0"></div>
<div class="cb" style="left:1148px;top:475px;width:17px;height:19px"><div class="arr" style="border-top-color:#a8a8a8"></div></div>
<div class="bt" style="left:858.5px;top:522.5px;width:95px;height:26.5px"></div>
<div class="t" style="left:706.0px;width:400px;text-align:center;top:528.29px;font-size:13.3px;line-height:13.3px;color:#1a1a1a;">Apply</div>
<div class="bt" style="left:973px;top:522.5px;width:95px;height:26.5px"></div>
<div class="t" style="left:820.5px;width:400px;text-align:center;top:528.29px;font-size:13.3px;line-height:13.3px;color:#1a1a1a;">OK</div>
<div class="dl" style="left:5px;top:581px;width:476.5px;height:271px;border-color:#b4b4b4"></div>
<div class="tb" style="left:6px;top:582px;width:474.5px;height:23px"></div>
<div class="t" style="left:9px;top:587.69px;font-size:11px;line-height:11px;color:#9a9a9a;letter-spacing:0">Exterior Cell</div>
<div class="t" style="left:21.5px;top:617.74px;font-size:13.3px;line-height:13.3px;color:#1a1a1a;">Cell Description:</div>
<div class="ed" style="left:21px;top:639.5px;width:447px;height:21.5px;background:#fff"></div>
<div class="t" style="left:24px;top:643.94px;font-size:13.3px;line-height:13.3px;color:#1a1a1a;">Ald Daedroth - (11, 20)</div>
<div class="cb" style="left:451px;top:641.5px;width:17px;height:19.5px"><div class="arr" style="border-top-color:#000"></div></div>
<div class="t" style="left:21.5px;top:689.74px;font-size:13.3px;line-height:13.3px;color:#1a1a1a;">Region (Weather Type):</div>
<div class="ed" style="left:21.5px;top:712px;width:211px;height:21px;background:#fff"></div>
<div class="t" style="left:24.5px;top:716.44px;font-size:13.3px;line-height:13.3px;color:#1a1a1a;">Azura's Coast Region</div>
<div class="cb" style="left:215.5px;top:714px;width:17px;height:19px"><div class="arr" style="border-top-color:#000"></div></div>
<div class="t" style="left:-95px;width:300px;text-align:right;top:766.74px;font-size:13.3px;line-height:13.3px;color:#1a1a1a;letter-spacing:0">Illegal To Sleep Here</div>
<div class="ck" style="left:222px;top:768px;width:11px;height:11px"></div>
<div class="bt" style="left:196.5px;top:818.5px;width:94.5px;height:26px"></div>
<div class="t" style="left:43.75px;width:400px;text-align:center;top:824.04px;font-size:13.3px;line-height:13.3px;color:#1a1a1a;">OK</div>
<div class="gb" style="left:253.5px;top:685px;width:211px;height:120px"></div>
<div class="gt" style="left:266px;top:676px;width:88px;height:16px"></div>
<div class="ck" style="left:268.5px;top:678.5px;width:12px;height:12px"><svg width="12" height="12" viewBox="0 0 12 12" style="position:absolute;left:-2px;top:-2px"><path d="M2.3 5.6 L5 8.6 L9.6 2.8" stroke="#000" stroke-width="2.2" fill="none"/></svg></div>
<div class="t" style="left:285.5px;top:678.74px;font-size:13.3px;line-height:13.3px;color:#1a1a1a;">Map Color</div>
<div class="t" style="left:-15px;width:300px;text-align:right;top:704.24px;font-size:13.3px;line-height:13.3px;color:#1a1a1a;">R:</div>
<div class="ed" style="left:288px;top:700.5px;width:55px;height:25px;background:#fff"></div>
<div class="t" style="left:108.5px;width:400px;text-align:center;top:704.04px;font-size:13.3px;line-height:13.3px;color:#1a1a1a;">202</div>
<div class="sp" style="left:327px;top:702.5px;width:16px;height:11.5px"><div class="up"></div></div>
<div class="sp" style="left:327px;top:714.0px;width:16px;height:11.5px"><div class="dn"></div></div>
<div class="t" style="left:-15px;width:300px;text-align:right;top:738.54px;font-size:13.3px;line-height:13.3px;color:#1a1a1a;">G:</div>
<div class="ed" style="left:288px;top:734.8px;width:55px;height:25px;background:#fff"></div>
<div class="t" style="left:108.5px;width:400px;text-align:center;top:738.34px;font-size:13.3px;line-height:13.3px;color:#1a1a1a;">165</div>
<div class="sp" style="left:327px;top:736.8px;width:16px;height:11.5px"><div class="up"></div></div>
<div class="sp" style="left:327px;top:748.3px;width:16px;height:11.5px"><div class="dn"></div></div>
<div class="t" style="left:-15px;width:300px;text-align:right;top:772.84px;font-size:13.3px;line-height:13.3px;color:#1a1a1a;">B:</div>
<div class="ed" style="left:288px;top:769.1px;width:55px;height:25px;background:#fff"></div>
<div class="t" style="left:108.5px;width:400px;text-align:center;top:772.64px;font-size:13.3px;line-height:13.3px;color:#1a1a1a;">96</div>
<div class="sp" style="left:327px;top:771.1px;width:16px;height:11.5px"><div class="up"></div></div>
<div class="sp" style="left:327px;top:782.6px;width:16px;height:11.5px"><div class="dn"></div></div>
<div class="sw" style="left:356.5px;top:700.5px;width:97px;height:59px;background:#caa560"></div>
<div class="bt" style="left:356px;top:768.5px;width:99px;height:26px"></div>
<div class="t" style="left:205.5px;width:400px;text-align:center;top:774.04px;font-size:13.3px;line-height:13.3px;color:#1a1a1a;">Select Color</div>
<div class="abs" style="left:940px;top:774px;width:260px;height:85px;background:#000"></div>
<div class="t" style="left:1010.5px;top:810.5px;font-family:'Liberation Mono',monospace;font-size:15px;line-height:15px;color:#fff;letter-spacing:0">ElderForge.ru</div>
</body></html>
